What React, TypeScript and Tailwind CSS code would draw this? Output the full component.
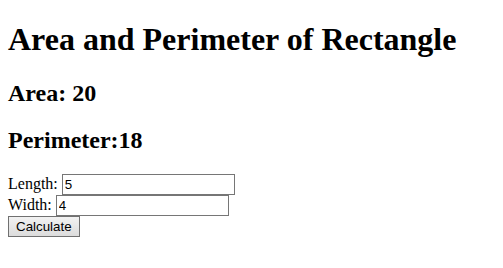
import React from "react";

const inputCls =
  "w-[173px] h-[21px] border border-[#767676] px-[2px] py-[1px] text-[13.33px] align-baseline outline-none font-['Liberation_Sans',Arial,sans-serif]";

export default function App() {
  return (
    <div className="px-2 bg-white text-black leading-[normal] text-[16px] font-['Liberation_Serif','Times_New_Roman',serif]">
      <h1 className="text-[32px] font-bold my-[21.44px] leading-[normal]">Area and Perimeter of Rectangle</h1>
      <h2 className="text-[24px] font-bold my-[19.92px] leading-[normal]">Area: 20</h2>
      <h2 className="text-[24px] font-bold my-[19.92px] leading-[normal]">Perimeter:18</h2>
      <form onSubmit={(e) => e.preventDefault()}>
        Length: <input defaultValue="5" className={inputCls} />
        <br />
        Width: <input defaultValue="4" className={inputCls} />
        <br />
        <button
          type="submit"
          className="h-[21px] px-[7px] border border-[#707070] bg-gradient-to-b from-[#f2f2f2] to-[#dcdcdc] text-[13.33px] text-black leading-none font-['Liberation_Sans',Arial,sans-serif]"
        >
          Calculate
        </button>
      </form>
    </div>
  );
}
